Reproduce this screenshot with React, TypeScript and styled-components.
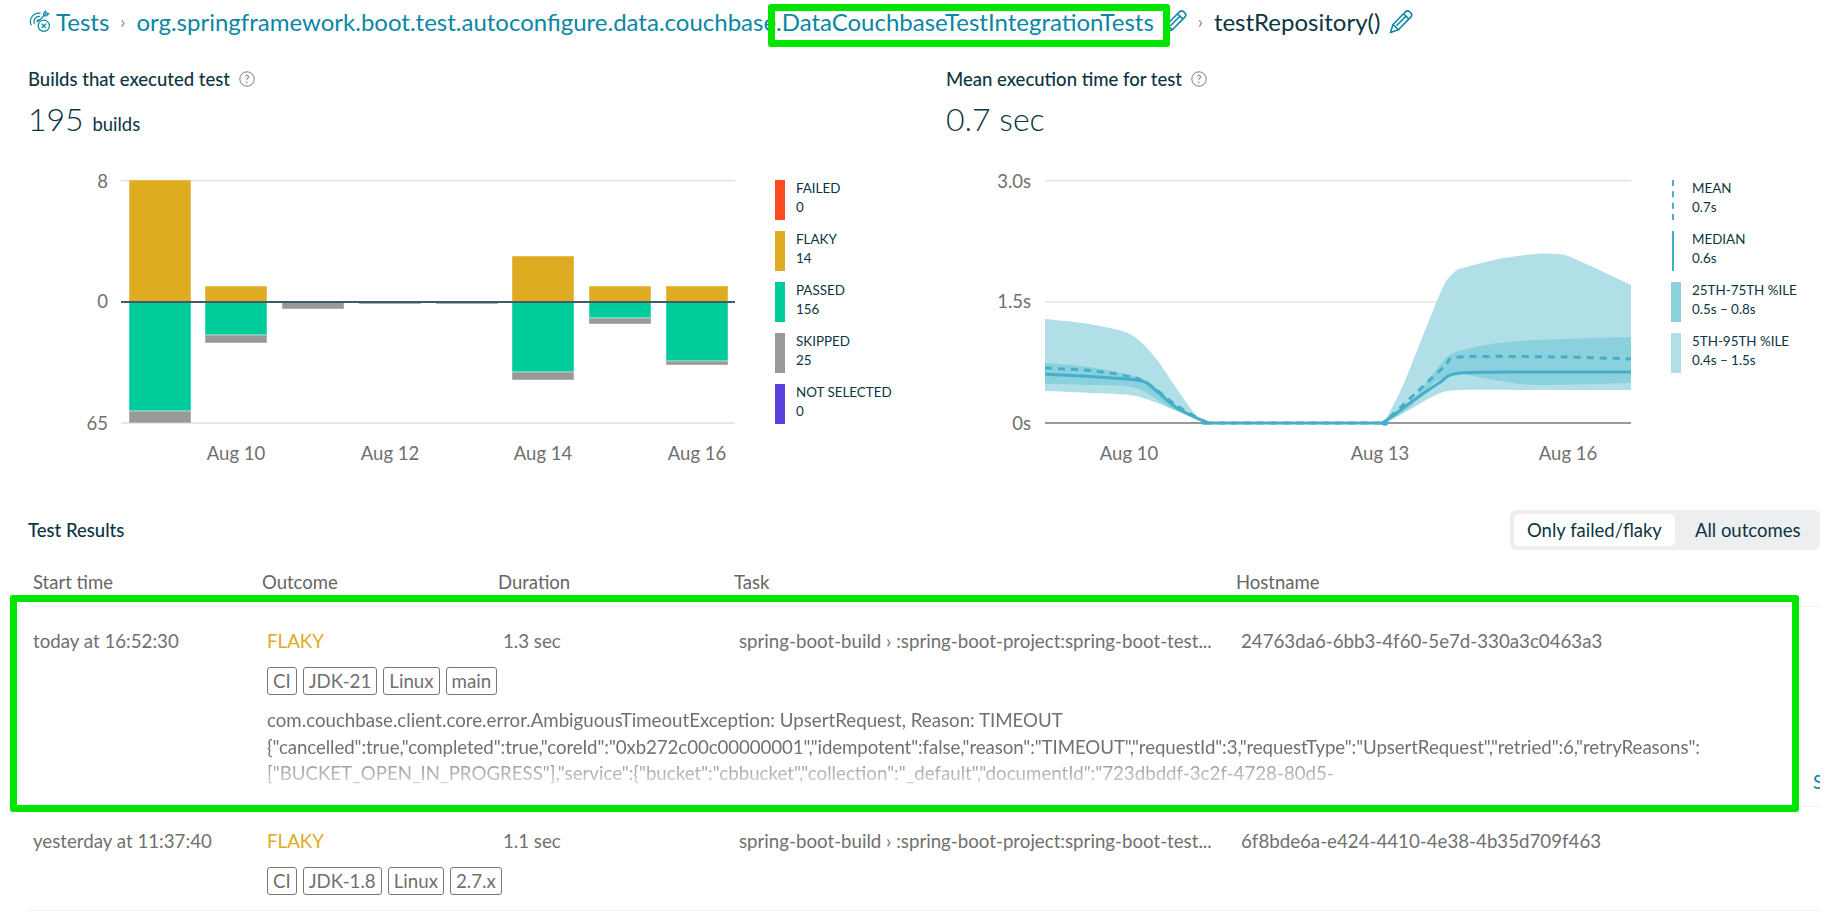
import React from 'react';
import styled, { createGlobalStyle } from 'styled-components';

const INK = '#0b3542';
const LINK = '#0a87a3';
const MUTED = '#707070';
const FLAKY = '#dfab20';
const PASSED = '#00cc9b';
const SKIPPED = '#999999';

type Point = [number, number];

// catmull-rom through hand-read points, low tension so the flat part stays flat
const smooth = (pts: Point[]) => {
    let d = `M${pts[0][0]} ${pts[0][1]}`;
    for (let i = 0; i < pts.length - 1; i++) {
        const p0 = pts[i - 1] ?? pts[i];
        const p1 = pts[i];
        const p2 = pts[i + 1];
        const p3 = pts[i + 2] ?? p2;
        const k = 0.14;
        d += ` C${p1[0] + (p2[0] - p0[0]) * k} ${p1[1] + (p2[1] - p0[1]) * k} ${p2[0] - (p3[0] - p1[0]) * k} ${p2[1] - (p3[1] - p1[1]) * k} ${p2[0]} ${p2[1]}`;
    }
    return d;
};

const area = (top: Point[], bottom: Point[]) => `${smooth(top)} ${smooth([...bottom].reverse()).replace('M', 'L')} Z`;

const bars = [
    { x: 101, flaky: 180, passed: 411, skipped: 423 },
    { x: 177, flaky: 286, passed: 335, skipped: 343 },
    { x: 254, flaky: 302, passed: 302, skipped: 309 },
    { x: 331, flaky: 302, passed: 302, skipped: 304 },
    { x: 408, flaky: 302, passed: 302, skipped: 304 },
    { x: 484, flaky: 256, passed: 372, skipped: 380 },
    { x: 561, flaky: 286, passed: 318, skipped: 324 },
    { x: 638, flaky: 286, passed: 361, skipped: 365 },
];

const outerTop: Point[] = [[0, 139], [44, 144], [85, 154], [109, 176], [132, 209], [150, 234], [161, 242], [170, 243], [330, 243], [339, 242], [359, 203], [383, 143], [400, 103], [412, 90], [418, 88], [453, 79], [490, 74], [510, 74], [523, 76], [552, 89], [586, 105]];
const outerBottom: Point[] = [[0, 211], [44, 213], [91, 216], [132, 231], [161, 242], [170, 243], [330, 243], [342, 242], [371, 226], [389, 216], [412, 210], [500, 210], [586, 210]];
const innerTop: Point[] = [[0, 183], [44, 187], [88, 196], [109, 206], [132, 226], [161, 242], [170, 243], [330, 243], [342, 242], [371, 216], [400, 179], [415, 171], [447, 164], [491, 160], [586, 157]];
const innerBottom: Point[] = [[0, 204], [44, 205], [91, 208], [126, 228], [161, 242], [170, 243], [330, 243], [345, 240], [366, 226], [389, 203], [412, 193], [427, 196], [456, 201], [491, 205], [586, 203]];
const median: Point[] = [[0, 194], [91, 200], [109, 209], [132, 228], [161, 242], [170, 243], [330, 243], [339, 242], [365, 223], [394, 203], [415, 193], [500, 192], [586, 192]];
const mean: Point[] = [[0, 188], [50, 191], [91, 198], [109, 208], [132, 226], [161, 242], [170, 243], [330, 243], [339, 242], [371, 213], [400, 186], [415, 177], [517, 177], [586, 179]];

const buildLegend = [
    { label: 'Failed', value: '0', color: '#ff4b21' },
    { label: 'Flaky', value: '14', color: FLAKY },
    { label: 'Passed', value: '156', color: PASSED },
    { label: 'Skipped', value: '25', color: SKIPPED },
    { label: 'Not selected', value: '0', color: '#5b41dc' },
];

const results = [
    {
        time: 'today at 16:52:30',
        duration: '1.3 sec',
        host: '24763da6-6bb3-4f60-5e7d-330a3c0463a3',
        tags: ['CI', 'JDK-21', 'Linux', 'main'],
        error: [
            'com.couchbase.client.core.error.AmbiguousTimeoutException: UpsertRequest, Reason: TIMEOUT',
            '{"cancelled":true,"completed":true,"coreId":"0xb272c00c00000001","idempotent":false,"reason":"TIMEOUT","requestId":3,"requestType":"UpsertRequest","retried":6,"retryReasons":',
            '["BUCKET_OPEN_IN_PROGRESS"],"service":{"bucket":"cbbucket","collection":"_default","documentId":"723dbddf-3c2f-4728-80d5-',
        ],
    },
    {
        time: 'yesterday at 11:37:40',
        duration: '1.1 sec',
        host: '6f8bde6a-e424-4410-4e38-4b35d709f463',
        tags: ['CI', 'JDK-1.8', 'Linux', '2.7.x'],
        error: [],
    },
];

const TestsIcon = () => (
    <BreadcrumbIcon width="23" height="23" viewBox="0 0 23 23" fill="none" stroke={LINK} strokeWidth="1.2" strokeLinecap="round">
        <path d="M12 3.2 A8.4 8.4 0 0 0 3.2 15" />
        <path d="M11.6 6.4 A5.4 5.4 0 0 0 6.2 13.6" />
        <path d="M11 9.6 A2.4 2.4 0 0 0 9 12" />
        <path d="M10.6 11 L18 3.6" />
        <path d="M15.6 3.6 L17.4 1.2 L18.2 3 L20.6 3.8 L18.4 5.8 L16 5.6 Z" />
        <circle cx="15.8" cy="15.8" r="5.6" />
        <path d="M14 14 L17.6 17.6 M17.6 14 L14 17.6" />
    </BreadcrumbIcon>
);

const PencilIcon = () => (
    <PencilSvg width="24" height="25" viewBox="0 0 24 25" fill="none" stroke={LINK} strokeWidth="1.6" strokeLinejoin="round">
        <path d="M1.5 23.5 L4 15.5 L16.5 2.8 Q18.6 0.8 20.7 2.8 L21.8 3.9 Q23.8 6 21.8 8.1 L9.4 20.8 Z" />
        <path d="M4 15.5 L9.4 20.8 M14.6 4.8 L19.9 10.1 M7.4 16.8 L17.4 6.8" />
    </PencilSvg>
);

const HintIcon = () => (
    <HintSvg width="16" height="16" viewBox="0 0 16 16">
        <circle cx="8" cy="8" r="7.2" fill="none" stroke="#7d7d7d" strokeWidth="1" />
        <HintMark x="8" y="11.6">?</HintMark>
    </HintSvg>
);

const BuildsChart = () => (
    <ChartSvg width="707" height="300" viewBox="28 170 707 300">
        <line x1="121" x2="735" y1="180.5" y2="180.5" stroke="#dfe3e8" strokeWidth="1.5" />
        <line x1="121" x2="735" y1="423" y2="423" stroke="#e6e6e6" strokeWidth="2" />
        {bars.map((b) => (
            <g key={b.x} transform={`translate(${b.x + 28} 0)`} stroke="rgba(255,255,255,0.45)" strokeWidth="1">
                {b.flaky < 302 && <rect width="62" y={b.flaky} height={302 - b.flaky} fill={FLAKY} />}
                {b.passed > 302 && <rect width="62" y="302" height={b.passed - 302} fill={PASSED} />}
                <rect width="62" y={b.passed} height={b.skipped - b.passed} fill={SKIPPED} />
            </g>
        ))}
        <line x1="121" x2="735" y1="302" y2="302" stroke="#3d5e69" strokeWidth="2" />
        <AxisText x="108" y="188" $anchor="end">8</AxisText>
        <AxisText x="108" y="308" $anchor="end">0</AxisText>
        <AxisText x="108" y="430" $anchor="end">65</AxisText>
        <AxisText x="236" y="460">Aug 10</AxisText>
        <AxisText x="390" y="460">Aug 12</AxisText>
        <AxisText x="543" y="460">Aug 14</AxisText>
        <AxisText x="697" y="460">Aug 16</AxisText>
    </ChartSvg>
);

const TimeChart = () => (
    <ChartSvg width="685" height="300" viewBox="946 170 685 300">
        <line x1="1045" x2="1631" y1="180.5" y2="180.5" stroke="#dfe3e8" strokeWidth="1.5" />
        <line x1="1045" x2="1631" y1="302" y2="302" stroke="#e3e3e3" strokeWidth="1.5" />
        <g transform="translate(1045 180)">
            <path d={area(outerTop, outerBottom)} fill="#b0dfe8" />
            <path d={area(innerTop, innerBottom)} fill="#8bd0dd" />
        </g>
        <line x1="1045" x2="1631" y1="423" y2="423" stroke="#999999" strokeWidth="2" />
        <g transform="translate(1045 180)" fill="none" stroke="#45afca">
            <path d={smooth(mean)} strokeWidth="3" strokeDasharray="7 6" />
            <path d={smooth(median)} strokeWidth="3" />
        </g>
        <AxisText x="1031" y="188" $anchor="end">3.0s</AxisText>
        <AxisText x="1031" y="308" $anchor="end">1.5s</AxisText>
        <AxisText x="1031" y="430" $anchor="end">0s</AxisText>
        <AxisText x="1129" y="460">Aug 10</AxisText>
        <AxisText x="1380" y="460">Aug 13</AxisText>
        <AxisText x="1568" y="460">Aug 16</AxisText>
    </ChartSvg>
);

export default function App() {
    return (
        <Page>
            <GlobalStyle />
            <Breadcrumb>
                <TestsIcon />
                <CrumbLink>Tests</CrumbLink>
                <CrumbSeparator>›</CrumbSeparator>
                <CrumbLink>org.springframework.boot.test.autoconfigure.data.couchbase.DataCouchbaseTestIntegrationTests</CrumbLink>
                <PencilIcon />
                <CrumbSeparator>›</CrumbSeparator>
                <CrumbCurrent>testRepository()</CrumbCurrent>
                <PencilIcon />
            </Breadcrumb>
            <Charts>
                <section>
                    <SectionTitle>
                        Builds that executed test <HintIcon />
                    </SectionTitle>
                    <Metric>
                        195 <MetricUnit>builds</MetricUnit>
                    </Metric>
                    <ChartRow>
                        <BuildsChart />
                        <Legend>
                            {buildLegend.map((l) => (
                                <LegendItem key={l.label}>
                                    <Swatch $color={l.color} />
                                    <LegendText>
                                        <LegendLabel>{l.label}</LegendLabel>
                                        <span>{l.value}</span>
                                    </LegendText>
                                </LegendItem>
                            ))}
                        </Legend>
                    </ChartRow>
                </section>
                <section>
                    <SectionTitle>
                        Mean execution time for test <HintIcon />
                    </SectionTitle>
                    <Metric>0.7 sec</Metric>
                    <ChartRow>
                        <TimeChart />
                        <Legend>
                            <LegendItem>
                                <LineSwatch $dashed />
                                <LegendText>
                                    <LegendLabel>Mean</LegendLabel>
                                    <span>0.7s</span>
                                </LegendText>
                            </LegendItem>
                            <LegendItem>
                                <LineSwatch />
                                <LegendText>
                                    <LegendLabel>Median</LegendLabel>
                                    <span>0.6s</span>
                                </LegendText>
                            </LegendItem>
                            <LegendItem>
                                <Swatch $color="#8bd0dd" />
                                <LegendText>
                                    <LegendLabel>25th-75th %ile</LegendLabel>
                                    <span>0.5s – 0.8s</span>
                                </LegendText>
                            </LegendItem>
                            <LegendItem>
                                <Swatch $color="#b0dfe8" />
                                <LegendText>
                                    <LegendLabel>5th-95th %ile</LegendLabel>
                                    <span>0.4s – 1.5s</span>
                                </LegendText>
                            </LegendItem>
                        </Legend>
                    </ChartRow>
                </section>
            </Charts>
            <ResultsHeader>
                <SectionTitle>Test Results</SectionTitle>
                <Toggle>
                    <ToggleOption $active>Only failed/flaky</ToggleOption>
                    <ToggleOption>All outcomes</ToggleOption>
                </Toggle>
            </ResultsHeader>
            <HeaderRow>
                <span>Start time</span>
                <span>Outcome</span>
                <span>Duration</span>
                <span>Task</span>
                <span>Hostname</span>
            </HeaderRow>
            {results.map((r) => (
                <ResultRow key={r.host}>
                    <span>{r.time}</span>
                    <Cell>
                        <Outcome>FLAKY</Outcome>
                    </Cell>
                    <Cell>{r.duration}</Cell>
                    <Cell>spring-boot-build › :spring-boot-project:spring-boot-test...</Cell>
                    <Cell>{r.host}</Cell>
                    <Details>
                        <Tags>
                            {r.tags.map((t) => (
                                <Tag key={t}>{t}</Tag>
                            ))}
                        </Tags>
                        {r.error.length > 0 && (
                            <ErrorText>
                                {r.error.map((line) => (
                                    <div key={line}>{line}</div>
                                ))}
                            </ErrorText>
                        )}
                    </Details>
                    {r.error.length > 0 && <ShowMore>Show more</ShowMore>}
                </ResultRow>
            ))}
            <HighlightCrumb />
            <HighlightRow />
        </Page>
    );
}

const GlobalStyle = createGlobalStyle`
    html, body {
        margin: 0;
        padding: 0;
        background: #fff;
    }
    body {
        font-family: Lato, "Liberation Sans", sans-serif;
        color: ${INK};
    }
`;

const Page = styled.div`
    position: relative;
    width: 1835px;
    height: 912px;
    box-sizing: border-box;
    padding: 0 15px 0 28px;
    overflow: hidden;
`;

const Breadcrumb = styled.div`
    display: flex;
    align-items: center;
    height: 42px;
    padding-bottom: 4px;
    font-size: 24px;
    white-space: nowrap;
`;

const BreadcrumbIcon = styled.svg`
    flex: none;
    margin-right: 5px;
`;

const CrumbLink = styled.span`
    color: ${LINK};
`;

const CrumbCurrent = styled.span`
    color: ${INK};
`;

const CrumbSeparator = styled.span`
    margin: 0 11px;
    font-size: 18px;
    color: #8a8a8a;
`;

const PencilSvg = styled.svg`
    flex: none;
    margin-left: 9px;
`;

const Charts = styled.div`
    display: grid;
    grid-template-columns: 918px 1fr;
    padding-top: 22px;
`;

const SectionTitle = styled.div`
    display: flex;
    align-items: center;
    gap: 4px;
    height: 22px;
    font-size: 18.5px;
    font-weight: 500;
    white-space: pre;
`;

const HintSvg = styled.svg`
    flex: none;
`;

const HintMark = styled.text`
    font-size: 11px;
    text-anchor: middle;
    fill: #7d7d7d;
`;

const Metric = styled.div`
    height: 36px;
    margin-top: 11px;
    font-size: 32px;
    font-weight: 300;
    line-height: 36px;
`;

const MetricUnit = styled.span`
    font-size: 18.5px;
    font-weight: 400;
`;

const ChartRow = styled.div`
    display: flex;
    margin-top: 33px;
`;

const ChartSvg = styled.svg`
    flex: none;
    display: block;
`;

const AxisText = styled.text<{ $anchor?: string }>`
    font-size: 18.5px;
    fill: ${MUTED};
    text-anchor: ${({ $anchor }) => $anchor ?? 'middle'};
`;

const Legend = styled.div`
    display: flex;
    flex-direction: column;
    gap: 11px;
    margin: 10px 0 0 40px;
`;

const LegendItem = styled.div`
    display: flex;
    gap: 11px;
    height: 40px;
`;

const Swatch = styled.div<{ $color: string }>`
    flex: none;
    width: 10px;
    background: ${({ $color }) => $color};
`;

const LineSwatch = styled.div<{ $dashed?: boolean }>`
    flex: none;
    width: 0;
    margin: 0 7px 0 1px;
    border-left: 2px ${({ $dashed }) => ($dashed ? 'dashed' : 'solid')} #45afca;
`;

const LegendText = styled.div`
    display: flex;
    flex-direction: column;
    margin-top: -1px;
    font-size: 13.4px;
    line-height: 19px;
`;

const LegendLabel = styled.span`
    text-transform: uppercase;
`;

const ResultsHeader = styled.div`
    display: flex;
    align-items: center;
    justify-content: space-between;
    height: 40px;
    margin-top: 40px;
`;

const Toggle = styled.div`
    display: flex;
    box-sizing: border-box;
    width: 310px;
    height: 40px;
    padding: 4px;
    background: #eceef0;
    border-radius: 6px;
`;

const ToggleOption = styled.div<{ $active?: boolean }>`
    display: flex;
    align-items: center;
    padding: 0 ${({ $active }) => ($active ? '13px' : '20px')};
    font-size: 18.5px;
    white-space: nowrap;
    border-radius: 5px;
    background: ${({ $active }) => ($active ? '#fff' : 'transparent')};
`;

const columns = '229px 236px 236px 502px 1fr';

const HeaderRow = styled.div`
    display: grid;
    grid-template-columns: ${columns};
    height: 57px;
    box-sizing: border-box;
    padding: 21px 0 0 5px;
    font-size: 18.5px;
    line-height: 22px;
    color: #666;
    border-bottom: 1px solid #eef0f1;
`;

const ResultRow = styled.div`
    position: relative;
    display: grid;
    grid-template-columns: ${columns};
    box-sizing: border-box;
    padding: 23px 0 15px 5px;
    font-size: 18.7px;
    line-height: 22px;
    color: ${MUTED};
    overflow: hidden;
    border-bottom: 1px solid #eef0f1;
`;

const Cell = styled.div`
    padding-left: 5px;
    white-space: nowrap;
`;

const Outcome = styled.span`
    color: ${FLAKY};
`;

const Details = styled.div`
    grid-column: 2 / -1;
    padding-left: 5px;
`;

const Tags = styled.div`
    display: flex;
    gap: 6px;
    margin-top: 15px;
`;

const Tag = styled.span`
    display: flex;
    align-items: center;
    box-sizing: border-box;
    height: 28px;
    padding: 0 5px;
    border: 1px solid #777;
    border-radius: 3px;
`;

const ErrorText = styled.div`
    height: 79px;
    margin: 12px 0 5px;
    line-height: 26.5px;
    white-space: nowrap;
    overflow: hidden;
    mask-image: linear-gradient(to bottom, #000 55%, rgba(0, 0, 0, 0.25) 100%);

    /* the quote pairs on this line set tighter in the reference */
    & > div:nth-child(2) {
        letter-spacing: -0.09px;
    }
`;

const ShowMore = styled.a`
    position: absolute;
    left: 1785px;
    top: 164px;
    color: ${LINK};
    white-space: nowrap;
`;

const HighlightCrumb = styled.div`
    position: absolute;
    left: 768px;
    top: 4px;
    width: 402px;
    height: 43px;
    box-sizing: border-box;
    border: 7px solid #00e600;
    border-radius: 3px;
    pointer-events: none;
`;

const HighlightRow = styled.div`
    position: absolute;
    left: 10px;
    top: 595px;
    width: 1789px;
    height: 217px;
    box-sizing: border-box;
    border: 7px solid #00e600;
    border-radius: 3px;
    pointer-events: none;
`;
